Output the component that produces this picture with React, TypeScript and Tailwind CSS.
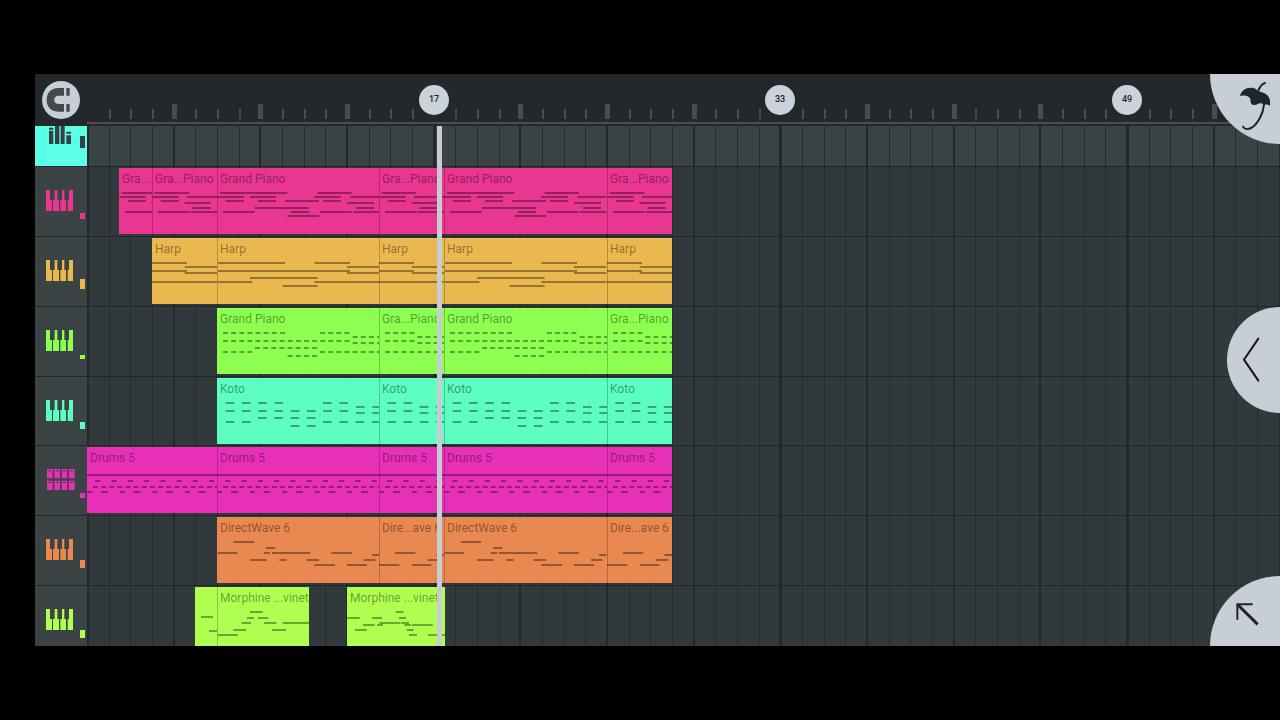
import React from "react";

type Note = [x0: number, x1: number, y: number];
type Clip = { start: number; end: number; label: string; notes: Note[] };
type Track = {
  name: string;
  icon: "keys" | "pads";
  bg: string;
  fg: string;
  row: string;
  meter: string;
  clips: Clip[];
};

const BAR = 65 / 3;

/* Note x values are thirds of a pixel from the clip's left edge, y values whole pixels. */
const run = (y: number, start: number, count: number, pitch: number, len: number): Note[] =>
  Array.from({ length: count }, (_, i): Note => [start + i * pitch, start + i * pitch + len, y]);

const pianoLong: Note[] = [
  [9, 211, 24], [302, 404, 24],
  [0, 81, 28], [99, 177, 28], [292, 372, 28], [400, 487, 28],
  [26, 81, 32], [123, 177, 32], [204, 306, 32], [318, 372, 32],
  [390, 471, 34],
  [113, 276, 39], [417, 471, 39],
  [18, 113, 43], [221, 276, 43], [309, 404, 43], [408, 487, 43],
  [211, 306, 47],
];
const pianoShort: Note[] = [
  [8, 112, 24], [2, 80, 28], [105, 196, 28], [26, 80, 32], [98, 176, 34],
  [121, 176, 39], [18, 112, 43], [115, 196, 43],
];
const harpLong: Note[] = [
  [3, 204, 24], [292, 399, 24], [390, 487, 28], [3, 399, 32], [390, 487, 34],
  [99, 302, 39], [3, 106, 43], [292, 487, 43], [197, 302, 47],
];
const harpShort: Note[] = [[0, 105, 24], [98, 196, 28], [0, 105, 32], [98, 196, 34], [0, 196, 43]];
const pluckLong: Note[] = [
  ...run(24, 18, 8, 24.4, 15), ...run(24, 309, 4, 24.4, 15), ...run(32, 18, 16, 24.3, 15),
  ...run(43, 18, 4, 24.4, 15), ...run(39, 114, 8, 24.4, 15), ...run(47, 212, 4, 24.4, 15),
  ...run(43, 309, 8, 24.4, 15), ...run(28, 407, 4, 24.4, 15), ...run(34, 407, 4, 24.4, 15),
];
const pluckShort: Note[] = [
  ...run(24, 18, 4, 24.4, 15), ...run(32, 18, 4, 24.4, 15), ...run(28, 115, 4, 24.4, 15),
  ...run(34, 115, 4, 24.4, 15), ...run(43, 18, 8, 24.4, 15),
];
const kotoLong: Note[] = [
  ...run(24, 26, 4, 48.8, 26), ...run(24, 318, 2, 48.8, 26), ...run(32, 26, 8, 48.8, 26),
  ...run(43, 26, 2, 48.8, 26), ...run(39, 123, 4, 48.8, 26), ...run(47, 221, 2, 48.8, 26),
  ...run(43, 318, 4, 48.8, 26), ...run(28, 417, 2, 48.8, 26), ...run(34, 417, 2, 48.8, 26),
];
const kotoShort: Note[] = [
  ...run(24, 25, 2, 48.8, 26), ...run(32, 25, 2, 48.8, 26), ...run(28, 122, 2, 48.8, 26),
  ...run(34, 122, 2, 48.8, 26), ...run(43, 25, 4, 48.8, 26),
];
const drums: Note[] = [
  [0, 490, 27], ...run(33, 25, 10, 48.8, 15), ...run(39, 18, 20, 24.4, 15),
  ...run(44, 1, 5, 97.5, 15), ...run(44, 42, 5, 97.5, 21),
];
const waveLong: Note[] = [
  [50, 111, 24], [147, 175, 30], [2, 61, 35], [140, 159, 35], [165, 280, 35], [343, 405, 35],
  [465, 487, 37], [99, 149, 42], [187, 209, 42], [269, 306, 42], [441, 475, 42],
  [292, 354, 47], [390, 450, 47],
];
const waveShort: Note[] = [[48, 109, 35], [172, 196, 37], [146, 184, 42], [0, 61, 47], [98, 157, 47]];

const arrangement = (long: string, short: string, a: Note[], b: Note[]): Clip[] => [
  { start: 130, end: 292, label: long, notes: a },
  { start: 292, end: 357, label: short, notes: b },
  { start: 357, end: 520, label: long, notes: a },
  { start: 520, end: 585, label: short, notes: b },
];

const tracks: Track[] = [
  {
    name: "Grand Piano", icon: "keys", bg: "bg-[#e93690]", fg: "text-[#e93690]", row: "h-[70px]", meter: "h-[6px]",
    clips: [
      { start: 32, end: 65, label: "Gra...", notes: pianoShort },
      { start: 65, end: 130, label: "Gra...Piano", notes: pianoShort },
      ...arrangement("Grand Piano", "Gra...Piano", pianoLong, pianoShort),
    ],
  },
  {
    name: "Harp", icon: "keys", bg: "bg-[#e9b84f]", fg: "text-[#e9b84f]", row: "h-[70px]", meter: "h-[10px]",
    clips: [
      { start: 65, end: 130, label: "Harp", notes: harpShort },
      ...arrangement("Harp", "Harp", harpLong, harpShort),
    ],
  },
  {
    name: "Grand Piano 2", icon: "keys", bg: "bg-[#8dff50]", fg: "text-[#8dff50]", row: "h-[70px]", meter: "h-[4px]",
    clips: arrangement("Grand Piano", "Gra...Piano", pluckLong, pluckShort),
  },
  {
    name: "Koto", icon: "keys", bg: "bg-[#5cffc0]", fg: "text-[#5cffc0]", row: "h-[69px]", meter: "h-[7px]",
    clips: arrangement("Koto", "Koto", kotoLong, kotoShort),
  },
  {
    name: "Drums 5", icon: "pads", bg: "bg-[#e82fb8]", fg: "text-[#e82fb8]", row: "h-[70px]", meter: "h-[5px]",
    clips: [
      { start: 0, end: 130, label: "Drums 5", notes: drums },
      ...arrangement("Drums 5", "Drums 5", drums, drums),
    ],
  },
  {
    name: "DirectWave 6", icon: "keys", bg: "bg-[#e98850]", fg: "text-[#e98850]", row: "h-[70px]", meter: "h-[8px]",
    clips: arrangement("DirectWave 6", "Dire...ave 6", waveLong, waveShort),
  },
  {
    name: "Morphine Clavinet", icon: "keys", bg: "bg-[#b0ff50]", fg: "text-[#b0ff50]", row: "h-[61px]", meter: "h-[8px]",
    clips: [
      { start: 108, end: 130, label: "", notes: [[18, 54, 29], [42, 66, 43]] },
      {
        start: 130, end: 222, label: "Morphine ...vinet",
        notes: [
          [99, 137, 24], [90, 111, 30], [123, 154, 30], [74, 102, 35], [141, 178, 35], [197, 276, 35],
          [49, 87, 42], [165, 207, 42], [2, 63, 47],
        ],
      },
      {
        start: 260, end: 358, label: "Morphine ...vinet",
        notes: [
          [146, 169, 24], [0, 38, 30], [75, 105, 30], [156, 177, 30], [97, 160, 35], [162, 186, 35],
          [48, 83, 37], [90, 108, 37], [172, 192, 37], [195, 257, 37], [24, 59, 42], [179, 200, 42],
          [186, 210, 47], [243, 294, 47],
        ],
      },
    ],
  },
];

function KeysIcon() {
  return (
    <svg className="h-[21px] w-[27px]" viewBox="0 0 81 63" fill="currentColor" aria-hidden="true">
      <path d="M0 0H12V30H18V63H0Z" />
      <path d="M26 0H34V30H39V63H21V30H26Z" />
      <path d="M48 0H55V30H60V63H43V30H48Z" />
      <path d="M69 0H81V63H65V30H69Z" />
    </svg>
  );
}

function PadsIcon() {
  return (
    <svg className="ml-px h-[21px] w-[28px]" viewBox="0 0 84 63" fill="currentColor" aria-hidden="true">
      {[0, 22, 44, 66].map((x) =>
        [0, 35].map((y) => (
          <g key={`${x}-${y}`}>
            <rect x={x} y={y} width="17" height="28" />
            <rect x={x + 4} y={y + 4} width="9" height="3" fill="#3b4344" />
          </g>
        ))
      )}
    </svg>
  );
}

function MixerIcon() {
  return (
    <svg className="h-[18px] w-[22px]" viewBox="0 0 66 54" fill="#344044" aria-hidden="true">
      <path d="M0 5H13V11H0ZM0 14H13V54H0ZM18 0H31V54H18ZM35 0H47V54H35ZM52 17H66V23H52ZM52 28H66V54H52Z" />
    </svg>
  );
}

function Ruler() {
  const bars = Array.from({ length: 120 }, (_, i) => i + 1).filter((n) => n % 16 !== 0);
  return (
    <div className="relative h-[52px] min-w-0 flex-1 overflow-hidden">
      <svg className="absolute inset-0 h-full w-full" aria-hidden="true">
        {bars.map((n) => {
          const x = Math.round(n * BAR);
          return n % 4 === 0 ? (
            <rect key={n} x={x - 2} y="30" width="5" height="15" fill="#484d50" />
          ) : (
            <rect key={n} x={x} y="35" width="2" height="10" fill="#484d50" />
          );
        })}
        <rect x="0" y="48" width="100%" height="2" fill="#4a4f52" />
        <rect x="0" y="50" width="100%" height="2" fill="#22282b" />
      </svg>
      {[17, 33, 49].map((bar) => (
        <span
          key={bar}
          className="absolute top-[11px] flex size-[30px] -translate-x-1/2 items-center justify-center rounded-full bg-[#cbd2da] text-[9px] font-medium text-[#1d2226]"
          style={{ left: Math.round((bar - 1) * BAR) }}
        >
          {bar}
        </span>
      ))}
    </div>
  );
}

function GridLines() {
  return (
    <svg className="absolute inset-0 h-full w-full" aria-hidden="true">
      {Array.from({ length: 120 }, (_, n) => {
        const w = n % 16 === 0 ? 3 : n % 4 === 0 ? 2 : 1;
        const x = Math.round(n * BAR) - (w > 1 ? 1 : 0);
        return <rect key={n} x={x} y="0" width={w} height="100%" fill={w > 1 ? "#22292c" : "#262d30"} />;
      })}
    </svg>
  );
}

function ClipView({ clip, bg, gap, joined }: { clip: Clip; bg: string; gap: number; joined: boolean }) {
  const width = clip.end - clip.start;
  return (
    <div className={`relative h-[66px] shrink-0 overflow-hidden ${bg}`} style={{ width, marginLeft: gap }}>
      <svg className="absolute inset-0 h-full w-full" viewBox={`0 0 ${width * 3} 198`} preserveAspectRatio="none" aria-hidden="true">
        {clip.notes.map(([a, b, y], i) => (
          <rect key={i} x={a} y={y * 3} width={b - a} height="6" fill="#000" fillOpacity="0.36" />
        ))}
        {joined && <rect x="0" y="0" width="3" height="198" fill="#000" fillOpacity="0.22" />}
      </svg>
      <span className="relative block px-[3px] pt-[3px] text-[12px] leading-[16px] whitespace-nowrap text-black/40">
        {clip.label}
      </span>
    </div>
  );
}

function TrackRow({ track }: { track: Track }) {
  return (
    <div className={`flex overflow-hidden ${track.row}`}>
      <button
        type="button"
        aria-label={track.name}
        className={`flex h-[70px] w-[52px] shrink-0 justify-between border-t border-[#22292c] bg-[#3b4344] pt-[23px] pr-[2px] pl-[11px] ${track.fg}`}
      >
        {track.icon === "keys" ? <KeysIcon /> : <PadsIcon />}
        <span className={`mb-[17px] w-[5px] self-end bg-current ${track.meter}`} />
      </button>
      <div className="flex min-w-0 flex-1 border-t border-[#20272a] pt-px">
        {track.clips.map((clip, i) => {
          const prev = i === 0 ? 0 : track.clips[i - 1].end;
          return (
            <ClipView key={clip.start} clip={clip} bg={track.bg} gap={clip.start - prev} joined={i > 0 && clip.start === prev} />
          );
        })}
      </div>
    </div>
  );
}

export default function App() {
  return (
    <div className="min-h-screen bg-black py-[74px] pl-[35px] font-['Roboto',sans-serif]">
      <main className="relative overflow-hidden bg-[#31393c]">
        <header className="flex bg-[#22282b]">
          <div className="w-[52px] shrink-0 pt-[7px] pl-[7px]">
            <button type="button" aria-label="Snap" className="block size-[38px] rounded-full bg-[#c8ced6]">
              <svg className="size-[38px]" viewBox="0 0 114 114" fill="#46494c" aria-hidden="true">
                <path d="M66 21H49C27 21 14 36 14 56.500S27 92 49 92H66V69H49C41 69 37 64 37 56.500S41 44 49 44H66Z" />
                <path d="M73 21H83V44H73ZM73 69H83V92H73Z" />
              </svg>
            </button>
          </div>
          <Ruler />
        </header>

        <section aria-label="Playlist" className="relative">
          <div className="absolute inset-y-0 right-0 left-[52px] overflow-hidden">
            <div className="h-[40px] bg-[#3b4344]" />
            <GridLines />
          </div>
          <div className="relative">
            <div className="flex h-[40px]">
              <button type="button" aria-label="Mixer" className="flex h-[40px] w-[52px] shrink-0 justify-between bg-[#5affe6] pr-[2px] pl-[14px]">
                <MixerIcon />
                <span className="mt-[10px] h-[12px] w-[5px] bg-[#344044]" />
              </button>
            </div>
            {tracks.map((t) => (
              <TrackRow key={t.name} track={t} />
            ))}
          </div>
          <div className="absolute inset-y-0 left-[402px] w-[5px] bg-[#c8cdd4]" />
        </section>

        <button type="button" aria-label="Menu" className="absolute top-0 right-0 size-[70px] rounded-bl-full bg-[#c8ced6]">
          <svg className="size-[70px]" viewBox="90 12 210 210" fill="none" stroke="#1d272b" strokeLinecap="round" aria-hidden="true">
            <path
              d="M180 78C183 62 198 52 214 53C224 53 229 58 235 64C253 67 268 76 270 92V107C264 104 256 102 252 105C247 98 238 98 232 103C226 107 215 106 213 99C210 94 214 87 207 82C203 76 188 75 180 78Z"
              fill="#1d272b"
              stroke="none"
            />
            <path d="M233 66C237 56 243 42 255 39" strokeWidth="6" />
            <path d="M252 103C250 130 233 163 213 174C204 179 194 178 189 170" strokeWidth="6" />
          </svg>
        </button>
        <button type="button" aria-label="Open panel" className="absolute top-[233px] right-0 h-[106px] w-[53px] rounded-l-full bg-[#c8ced6]">
          <svg className="h-[106px] w-[53px]" viewBox="0 0 159 318" fill="none" stroke="#15191c" strokeWidth="6" strokeLinecap="round" aria-hidden="true">
            <path d="M94 95L51 158L94 221" />
          </svg>
        </button>
        <button type="button" aria-label="Zoom out" className="absolute right-0 bottom-0 size-[70px] rounded-tl-full bg-[#c8ced6]">
          <svg className="size-[70px]" viewBox="90 827 210 210" fill="none" stroke="#1d2327" aria-hidden="true">
            <path d="M218 912H172V958" strokeWidth="6" />
            <path d="M174 914L233 972" strokeWidth="9" />
          </svg>
        </button>
      </main>
    </div>
  );
}
